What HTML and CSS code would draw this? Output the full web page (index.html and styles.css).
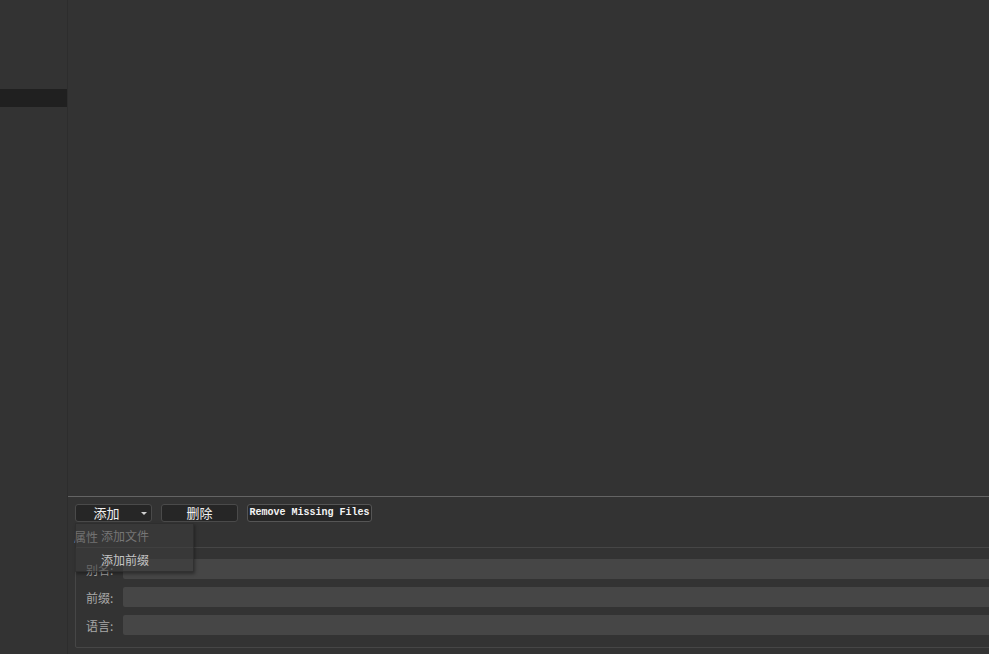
FILE: index.html
```html
<!DOCTYPE html>
<html lang="zh">
<head>
    <meta charset="UTF-8">
    <title>资源编辑</title>
    <link rel="stylesheet" href="styles.css">
</head>
<body>
    <div class="app">
        <aside class="sidebar">
            <div class="sidebar-row selected"></div>
        </aside>

        <main class="main">
            <div class="view"></div>

            <div class="panel">
                <div class="toolbar">
                    <div class="dropdown">
                        <button class="btn btn-drop">添加<span class="caret"></span></button>
                        <div class="menu">
                            <div class="menu-item disabled">添加文件</div>
                            <div class="menu-item">添加前缀</div>
                        </div>
                    </div>
                    <button class="btn">删除</button>
                    <button class="btn btn-mono">Remove Missing Files</button>
                </div>

                <div class="group">
                    <div class="group-title">属性</div>
                    <div class="group-box">
                        <div class="field">
                            <label>别名:</label>
                            <div class="input"></div>
                        </div>
                        <div class="field">
                            <label>前缀:</label>
                            <div class="input"></div>
                        </div>
                        <div class="field">
                            <label>语言:</label>
                            <div class="input"></div>
                        </div>
                    </div>
                </div>
            </div>
        </main>
    </div>
</body>
</html>
```

FILE: styles.css
```css
html, body {
    margin: 0;
    height: 100%;
    overflow: hidden;
    background-color: #333333;
    font-family: "Noto Sans CJK SC", "Noto Sans", sans-serif;
    font-size: 12px;
    color: #c8c8c8;
}

.app {
    display: flex;
    height: 654px;
}

.sidebar {
    width: 67px;
    flex-shrink: 0;
    border-right: 1px solid #2d2d2d;
    padding-top: 89px;
}

.sidebar-row {
    height: 18px;
}

.sidebar-row.selected {
    background-color: #202020;
}

.main {
    flex: 1;
    display: flex;
    flex-direction: column;
    min-width: 0;
}

.view {
    height: 496px;
    border-bottom: 1px solid #646464;
}

.panel {
    padding: 7px 0 0 7px;
    margin-right: -12px;
}

.toolbar {
    display: flex;
    gap: 9px;
    height: 18px;
}

.btn {
    height: 18px;
    width: 77px;
    padding: 0;
    background-color: #262626;
    border: 1px solid #4a4a4a;
    border-radius: 3px;
    color: #f0f0f0;
    font-family: inherit;
    font-size: 13px;
    line-height: 16px;
    position: relative;
}

.btn-drop {
    padding-right: 14px;
}

.caret {
    position: absolute;
    right: 4px;
    top: 7px;
    border-left: 3px solid transparent;
    border-right: 3px solid transparent;
    border-top: 3px solid #d0d0d0;
}

.btn-mono {
    width: 125px;
    font-family: "Liberation Mono", "DejaVu Sans Mono", monospace;
    font-size: 10px;
    font-weight: bold;
    color: #f4f4f4;
    border-color: #555555;
}

.dropdown {
    position: relative;
}

.menu {
    position: absolute;
    left: 0;
    top: 19px;
    width: 117px;
    height: 47px;
    background-color: rgba(60, 60, 60, 0.6);
    border: 1px solid rgba(40, 40, 40, 0.6);
    box-shadow: 1px 2px 3px rgba(0, 0, 0, 0.35);
    z-index: 5;
}

.menu-item {
    height: 24px;
    line-height: 24px;
    padding-left: 25px;
    color: #c4c4c4;
}

.menu-item.disabled {
    color: #767676;
}

.group {
    margin-top: 7px;
}

.group-title {
    margin-left: -1px;
    height: 16px;
    line-height: 16px;
    color: #c0c0c0;
}

.group-box {
    margin-top: 2px;
    border: 1px solid #464646;
    border-radius: 2px;
    height: 101px;
    padding: 11px 0 0 10px;
    box-sizing: border-box;
    display: flex;
    flex-direction: column;
    gap: 8px;
}

.field {
    display: flex;
    align-items: center;
    height: 20px;
}

.field label {
    width: 37px;
    flex-shrink: 0;
    color: #a8a8a8;
}

.input {
    flex: 1;
    height: 20px;
    background-color: #464646;
    border-radius: 2px;
}
```
